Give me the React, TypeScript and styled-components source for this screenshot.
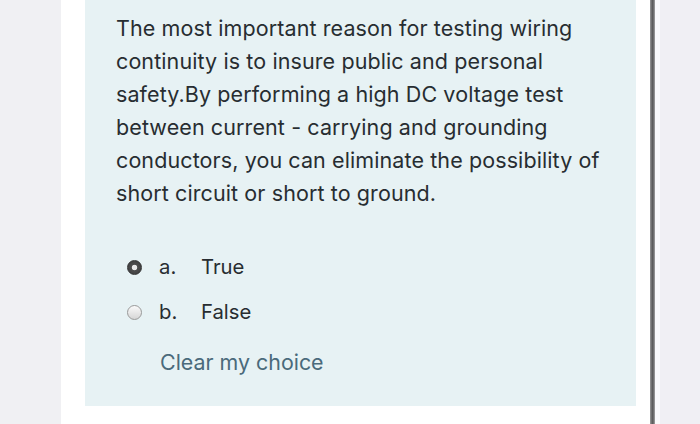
import React from 'react';
import styled, { createGlobalStyle } from 'styled-components';

const GlobalStyle = createGlobalStyle`
  html, body {
    margin: 0;
    padding: 0;
    background: #f1f1f4;
  }
  body {
    font-family: Inter, "Liberation Sans", Arial, sans-serif;
  }
`;

const Page = styled.div`
  display: flex;
  width: 700px;
  height: 424px;
  overflow: hidden;
  background: #f1f1f4;
`;

const Gutter = styled.div`
  width: 61px;
  flex: none;
  background: #f0f0f3;
`;

const Sheet = styled.div`
  width: 589px;
  flex: none;
  box-sizing: border-box;
  padding: 0 14px 0 24px;
  background: #ffffff;
`;

const Edge = styled.div`
  width: 5px;
  flex: none;
  background: linear-gradient(90deg, #9a9a9a 0%, #5e5e5e 45%, #5e5e5e 60%, #a5a5a5 100%);
`;

const EdgeMargin = styled.div`
  width: 5px;
  flex: none;
  background: #fbfbfc;
`;

const Outside = styled.div`
  flex: 1;
  background: #f0eff4;
`;

const QuestionBox = styled.div`
  height: 406px;
  box-sizing: border-box;
  padding: 12px 10px 0 31px;
  background: #e7f2f4;
  color: #272d31;
`;

const QuestionText = styled.p`
  margin: 0;
  font-size: 21.5px;
  line-height: 33px;
  letter-spacing: 0.1px;
  white-space: nowrap;
`;

const Answers = styled.div`
  display: flex;
  flex-direction: column;
  gap: 15px;
  margin-top: 42px;
  padding-left: 11px;
`;

const Option = styled.label`
  display: flex;
  align-items: center;
  height: 30px;
  font-size: 20.3px;
  line-height: 30px;
`;

const Radio = styled.span<{ $checked?: boolean }>`
  width: 15px;
  height: 15px;
  flex: none;
  box-sizing: border-box;
  border-radius: 50%;
  margin-right: 17px;
  border: 1px solid ${p => (p.$checked ? '#333' : '#999')};
  background: ${p =>
    p.$checked
      ? 'radial-gradient(circle at 50% 50%, #e8e8e8 0 2.4px, #4d4d4d 3.1px, #3a3a3a 100%)'
      : 'linear-gradient(180deg, #fafafa 0%, #d6d6d6 100%)'};
`;

const OptionLetter = styled.span`
  width: 42px;
  flex: none;
`;

const ClearLink = styled.a`
  display: block;
  margin-top: 20px;
  padding-left: 44px;
  font-size: 21.4px;
  line-height: 30px;
  color: #4a6a7b;
  text-decoration: none;
`;

const options = [
  { letter: 'a.', text: 'True', checked: true },
  { letter: 'b.', text: 'False', checked: false },
];

export default function App() {
  return (
    <Page>
      <GlobalStyle />
      <Gutter />
      <Sheet>
        <QuestionBox>
          <QuestionText>
            The most important reason for testing wiring<br />
            continuity is to insure public and personal<br />
            safety.By performing a high DC voltage test<br />
            between current - carrying and grounding<br />
            conductors, you can eliminate the possibility of<br />
            short circuit or short to ground.
          </QuestionText>
          <Answers>
            {options.map(o => (
              <Option key={o.letter}>
                <Radio $checked={o.checked} />
                <OptionLetter>{o.letter}</OptionLetter>
                {o.text}
              </Option>
            ))}
          </Answers>
          <ClearLink href="#">Clear my choice</ClearLink>
        </QuestionBox>
      </Sheet>
      <Edge />
      <EdgeMargin />
      <Outside />
    </Page>
  );
}
